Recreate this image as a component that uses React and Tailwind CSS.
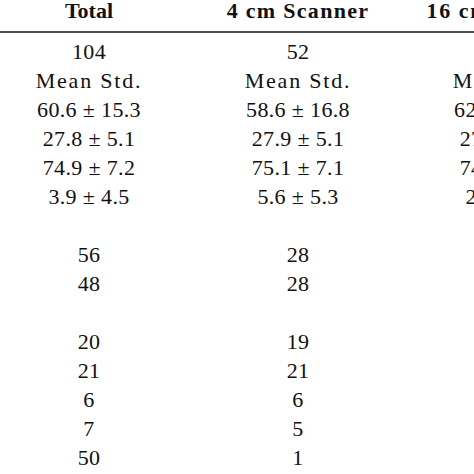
import React from "react";

const columns = [
    {
        title: "Total",
        titleClass: "tracking-normal",
        rows: ["104", "Mean Std.", "60.6 ± 15.3", "27.8 ± 5.1", "74.9 ± 7.2", "3.9 ± 4.5", "", "56", "48", "", "20", "21", "6", "7", "50"]
    },
    {
        title: "4 cm Scanner",
        titleClass: "tracking-[1.3px]",
        rows: ["52", "Mean Std.", "58.6 ± 16.8", "27.9 ± 5.1", "75.1 ± 7.1", "5.6 ± 5.3", "", "28", "28", "", "19", "21", "6", "5", "1"]
    },
    {
        title: "16 cm Scanner",
        titleClass: "tracking-[1.6px]",
        rows: ["52", "Mean Std.", "62.6 ± 13.6", "27.7 ± 5.2", "74.7 ± 7.4", "2.2 ± 2.6", "", "28", "20", "", "1", "0", "0", "2", "49"]
    }
];

const widths = ["w-[178px]", "w-[240px]", "w-[176px]"];

const App = () => {
    const rowCount = columns[0].rows.length;

    return (
        <div className="w-[474px] h-[474px] overflow-hidden bg-white text-[#111111] font-['Liberation_Serif',serif]">
            <table className="table-fixed w-[594px] border-collapse">
                <colgroup>
                    {widths.map((w) => (
                        <col key={w} className={w} />
                    ))}
                </colgroup>
                <thead>
                    <tr>
                        {columns.map((col) => (
                            <th
                                key={col.title}
                                className={`h-[32px] p-0 pt-[1px] align-top border-b-2 border-[#4d4d4d] text-center text-[22px] leading-[20px] font-bold ${col.titleClass}`}
                            >
                                {col.title}
                            </th>
                        ))}
                    </tr>
                </thead>
                <tbody>
                    {/* spacer under the rule */}
                    <tr>
                        <td colSpan={3} className="h-[5px] p-0" />
                    </tr>
                    {Array.from({ length: rowCount }).map((_, i) => (
                        <tr key={i}>
                            {columns.map((col) => (
                                <td
                                    key={col.title}
                                    className={
                                        col.rows[i] === "Mean Std."
                                            ? "h-[29px] p-0 text-center text-[22px] leading-[29px] whitespace-nowrap tracking-[1.8px]"
                                            : "h-[29px] p-0 text-center text-[22px] leading-[29px] whitespace-nowrap tracking-[0.35px]"
                                    }
                                >
                                    {col.rows[i]}
                                </td>
                            ))}
                        </tr>
                    ))}
                </tbody>
            </table>
        </div>
    );
};

export default App;
